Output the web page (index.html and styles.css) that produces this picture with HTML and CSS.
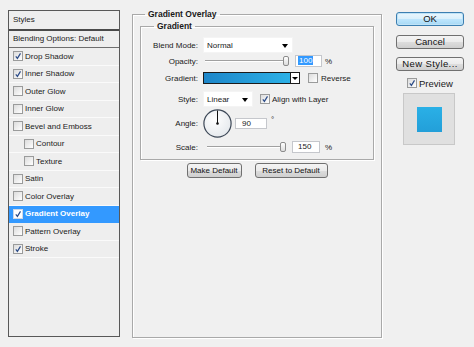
FILE: index.html
```html
<!DOCTYPE html>
<html lang="en">
<head>
    <meta charset="UTF-8">
    <title>Layer Style</title>
    <link rel="stylesheet" href="styles.css">
</head>
<body>
    <div class="dialog">
        <div class="styles-panel">
            <div class="panel-head">Styles</div>
            <div class="panel-blend">Blending Options: Default</div>
            <ul class="style-list">
                <li class="style-item"><span class="cb on"><svg viewBox="0 0 8 8"><polyline points="1.8,4.4 3.4,6.4 6.5,1.4"/></svg></span>Drop Shadow</li>
                <li class="style-item"><span class="cb on"><svg viewBox="0 0 8 8"><polyline points="1.8,4.4 3.4,6.4 6.5,1.4"/></svg></span>Inner Shadow</li>
                <li class="style-item"><span class="cb"></span>Outer Glow</li>
                <li class="style-item"><span class="cb"></span>Inner Glow</li>
                <li class="style-item"><span class="cb"></span>Bevel and Emboss</li>
                <li class="style-item sub"><span class="cb"></span>Contour</li>
                <li class="style-item sub"><span class="cb"></span>Texture</li>
                <li class="style-item"><span class="cb"></span>Satin</li>
                <li class="style-item"><span class="cb"></span>Color Overlay</li>
                <li class="style-item selected"><span class="cb on"><svg viewBox="0 0 8 8"><polyline points="1.8,4.4 3.4,6.4 6.5,1.4"/></svg></span>Gradient Overlay</li>
                <li class="style-item"><span class="cb"></span>Pattern Overlay</li>
                <li class="style-item"><span class="cb on"><svg viewBox="0 0 8 8"><polyline points="1.8,4.4 3.4,6.4 6.5,1.4"/></svg></span>Stroke</li>
            </ul>
        </div>

        <fieldset class="group outer">
            <legend>Gradient Overlay</legend>
            <fieldset class="group inner">
                <legend>Gradient</legend>

                <div class="field row-blend">
                    <span class="label">Blend Mode:</span>
                    <div class="select blend-select">Normal<span class="arrow"></span></div>
                </div>

                <div class="field row-opacity">
                    <span class="label">Opacity:</span>
                    <div class="slider opacity-slider"><span class="track"></span><span class="thumb"></span></div>
                    <div class="num opacity-num"><span class="sel">100</span></div>
                    <span class="unit">%</span>
                </div>

                <div class="field row-gradient">
                    <span class="label">Gradient:</span>
                    <div class="gradient-bar"></div>
                    <div class="gradient-drop"><span class="arrow"></span></div>
                    <span class="cb reverse-cb"></span>
                    <span class="cb-label">Reverse</span>
                </div>

                <div class="field row-style">
                    <span class="label">Style:</span>
                    <div class="select style-select">Linear<span class="arrow"></span></div>
                    <span class="cb on align-cb"><svg viewBox="0 0 8 8"><polyline points="1.8,4.4 3.4,6.4 6.5,1.4"/></svg></span>
                    <span class="cb-label">Align with Layer</span>
                </div>

                <div class="field row-angle">
                    <span class="label">Angle:</span>
                    <svg class="dial" viewBox="0 0 29 29">
                        <defs>
                            <radialGradient id="dialFill" cx="40%" cy="35%" r="70%">
                                <stop offset="0" stop-color="#ffffff"/>
                                <stop offset="1" stop-color="#e4e8ec"/>
                            </radialGradient>
                        </defs>
                        <circle cx="14.5" cy="14.5" r="13.6" fill="url(#dialFill)" stroke="#3d4857" stroke-width="1.2"/>
                        <line x1="14.5" y1="14.5" x2="14.5" y2="1.5" stroke="#111" stroke-width="1"/>
                        <circle cx="14.5" cy="14.5" r="1.3" fill="#111"/>
                    </svg>
                    <div class="num angle-num">90</div>
                    <span class="deg">°</span>
                </div>

                <div class="field row-scale">
                    <span class="label">Scale:</span>
                    <div class="slider scale-slider"><span class="track"></span><span class="thumb"></span></div>
                    <div class="num scale-num">150</div>
                    <span class="unit">%</span>
                </div>
            </fieldset>

            <div class="defaults">
                <button class="btn make-default">Make Default</button>
                <button class="btn reset-default">Reset to Default</button>
            </div>
        </fieldset>

        <div class="side">
            <button class="btn side-btn ok">OK</button>
            <button class="btn side-btn">Cancel</button>
            <button class="btn side-btn new-style">New Style...</button>
            <div class="preview-check">
                <span class="cb on"><svg viewBox="0 0 8 8"><polyline points="1.8,4.4 3.4,6.4 6.5,1.4"/></svg></span>
                <span class="preview-label">Preview</span>
            </div>
            <div class="preview-box"><span class="swatch"></span></div>
        </div>
    </div>
</body>
</html>
```

FILE: styles.css
```css
* {
    margin: 0;
    padding: 0;
    box-sizing: border-box;
}

body {
    width: 474px;
    height: 347px;
    overflow: hidden;
    background: #f0f0f0;
    font-family: "Liberation Sans", Arial, sans-serif;
    font-size: 8px;
    color: #1a1a1a;
}

.dialog {
    display: flex;
    align-items: flex-start;
    padding: 10px 0 0 8px;
}

/* styles list */
.styles-panel {
    width: 112px;
    height: 327px;
    border: 1px solid #585858;
    background: #eeeeee;
    flex-shrink: 0;
}

.panel-head {
    height: 20px;
    line-height: 18px;
    padding-left: 4px;
    border-bottom: 2px solid #4a4a4a;
}

.panel-blend {
    height: 17px;
    line-height: 16px;
    padding-left: 4px;
    border-bottom: 1px solid #6e6e6e;
}

.style-list {
    list-style: none;
}

.style-item {
    height: 17.5px;
    display: flex;
    align-items: center;
    padding-left: 4px;
    border-bottom: 1px solid #fafafa;
}

.style-item .cb {
    margin-right: 2px;
}

.style-item.sub {
    padding-left: 15px;
}

.style-item.selected {
    background: #3399ff;
    color: #fff;
    font-weight: bold;
    border-bottom-color: #3399ff;
}

.style-item.selected .cb {
    background: #fff;
    border-color: #cfd8e6;
}

/* checkbox */
.cb {
    width: 10px;
    height: 10px;
    border: 1px solid #9a9b9b;
    background: linear-gradient(135deg, #dcdcdc 0%, #f4f4f4 70%, #fff 100%);
    display: inline-flex;
    align-items: center;
    justify-content: center;
    flex-shrink: 0;
}

.cb svg {
    width: 8px;
    height: 8px;
    fill: none;
    stroke: #2c4c88;
    stroke-width: 1.2;
}

/* group boxes */
.group {
    border: 1px solid #a9a9a9;
    box-shadow: inset 1px 1px 0 #fff, 1px 1px 0 #fff;
}

.group legend {
    font-weight: bold;
    font-size: 8.5px;
    line-height: 10px;
    padding: 0 3px;
}

.outer {
    width: 250px;
    height: 329px;
    margin: -1px 0 0 12px;
    padding: 2px 7px 0 7px;
    flex-shrink: 0;
}

.outer > legend {
    margin-left: 5px;
}

.inner {
    width: 234px;
    padding: 0 0 6px 0;
}

.inner > legend {
    margin-left: 13px;
}

.field {
    display: flex;
    align-items: center;
}

.label {
    width: 57px;
    margin-right: 5px;
    text-align: right;
    flex-shrink: 0;
}

.row-blend { height: 16px; margin-top: 6px; }
.row-opacity { height: 12px; margin-top: 2px; }
.row-gradient { height: 12px; margin-top: 5px; }
.row-style { height: 16px; margin-top: 7px; }
.row-angle { height: 29px; margin-top: 2px; }
.row-scale { height: 12px; margin-top: 3px; }

.select {
    position: relative;
    height: 16px;
    line-height: 16px;
    background: #fff;
    border: 1px solid #f4f4f4;
    padding-left: 3px;
}

.blend-select { width: 90px; }
.style-select { width: 50px; }

.arrow {
    position: absolute;
    right: 4px;
    top: 6px;
    border-left: 3.5px solid transparent;
    border-right: 3.5px solid transparent;
    border-top: 4px solid #000;
}

.slider {
    position: relative;
    height: 12px;
}

.track {
    position: absolute;
    left: 0;
    right: 2px;
    top: 5px;
    height: 2px;
    border-top: 1px solid #a0a0a0;
    border-bottom: 1px solid #fff;
}

.thumb {
    position: absolute;
    right: 0;
    top: 1px;
    width: 6px;
    height: 10px;
    border: 1px solid #8c8c8c;
    border-radius: 2px;
    background: linear-gradient(#ffffff, #dcdcdc);
}

.opacity-slider { width: 84px; margin-left: 2px; }
.scale-slider { width: 79px; margin-left: 4px; }

.num {
    height: 12px;
    line-height: 10px;
    background: #fff;
    border: 1px solid #c5c7cc;
    padding-left: 2px;
}

.opacity-num { width: 27px; margin-left: 6px; }
.scale-num { width: 28px; margin-left: 6px; padding-left: 5px; }
.angle-num { width: 32px; height: 11px; margin-left: 3px; padding-left: 6px; }

.sel {
    background: #3399ff;
    color: #fff;
    padding: 0 1px;
}

.unit {
    margin-left: 3px;
}

.scale-num + .unit {
    margin-left: 5px;
}

.deg {
    margin-left: 4px;
    align-self: flex-start;
    margin-top: 6px;
}

.gradient-bar {
    width: 88px;
    height: 12px;
    border: 1px solid #1b1b1b;
    background: linear-gradient(to right, #1d86c9, #2cb1e7);
}

.gradient-drop {
    position: relative;
    width: 9px;
    height: 12px;
    border: 1px solid #1b1b1b;
    border-left: none;
    background: #fff;
}

.gradient-drop .arrow {
    right: 1px;
    top: 4px;
    border-left-width: 3px;
    border-right-width: 3px;
    border-top-width: 3px;
}

.reverse-cb { margin-left: 8px; }
.align-cb { margin-left: 7px; }

.cb-label {
    margin-left: 2px;
}

.reverse-cb + .cb-label {
    margin-left: 3px;
}

.dial {
    width: 29px;
    height: 29px;
}

/* buttons */
.btn {
    font-family: "Liberation Sans", Arial, sans-serif;
    font-size: 8px;
    color: #111;
    height: 15px;
    border: 1px solid #707070;
    border-radius: 3px;
    background: linear-gradient(#f4f4f4 0%, #ebebeb 50%, #dddddd 51%, #cfcfcf 100%);
}

.defaults {
    display: flex;
    justify-content: center;
    gap: 13px;
    margin-top: 3px;
}

.make-default { width: 55px; }
.reset-default { width: 73px; }

.side {
    display: flex;
    flex-direction: column;
    width: 68px;
    margin: 2px 0 0 14px;
}

.side-btn {
    height: 14px;
    font-size: 9.5px;
    line-height: 12px;
}

.side-btn + .side-btn {
    margin-top: 9px;
}

.new-style {
    margin-top: 8px !important;
    letter-spacing: 0.4px;
}

.ok {
    border-color: #3c7fb1;
    background: linear-gradient(#eaf6fd 0%, #d9f0fc 50%, #bee6fd 51%, #a7d9f5 100%);
    box-shadow: 0 0 0 1px #bfe3f7 inset;
}

.preview-check {
    display: flex;
    align-items: center;
    margin-top: 7px;
    padding-left: 11px;
    height: 10px;
}

.preview-label {
    font-size: 9.5px;
    margin-left: 2px;
}

.preview-box {
    width: 52px;
    height: 52px;
    margin: 5px 0 0 7px;
    border: 1px solid #c8c8c8;
    background: #e0e0e0;
    display: flex;
    align-items: center;
    justify-content: center;
}

.swatch {
    width: 25px;
    height: 25px;
    background: linear-gradient(#2ab0e6, #239fd9);
}
```
